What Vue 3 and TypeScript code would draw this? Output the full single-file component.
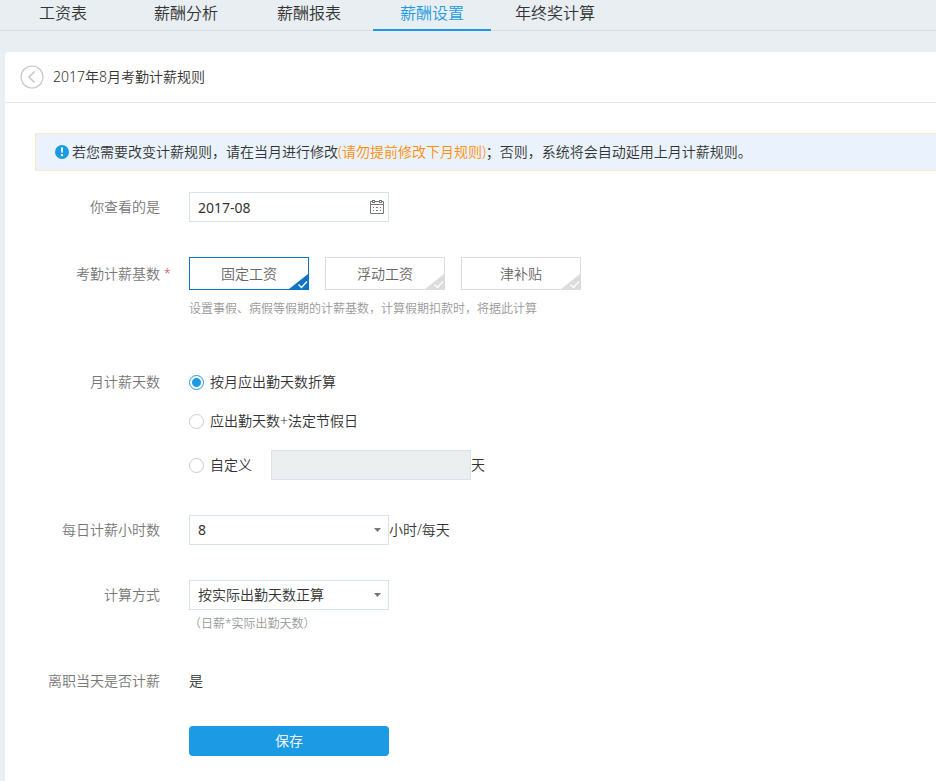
<script setup lang="ts">
import { ref } from 'vue'

interface BasisOption {
  key: string
  name: string
  checked: boolean
}

const tabs: string[] = ['工资表', '薪酬分析', '薪酬报表', '薪酬设置', '年终奖计算']
const activeTab = ref('薪酬设置')

const month = ref('2017-08')
const basis = ref<BasisOption[]>([
  { key: 'fixed', name: '固定工资', checked: true },
  { key: 'floating', name: '浮动工资', checked: false },
  { key: 'allowance', name: '津补贴', checked: false },
])
const dayRule = ref('attendance')
const customDays = ref('')
const hours = ref('8')
const method = ref('forward')
</script>

<template>
  <div class="page">
    <nav class="tabs">
      <a
        v-for="tab in tabs"
        :key="tab"
        href="#"
        class="tab"
        :class="{ active: tab === activeTab }"
        @click.prevent="activeTab = tab"
      >{{ tab }}</a>
    </nav>

    <main class="card">
      <header class="card-head">
        <button type="button" class="back" aria-label="返回">
          <svg width="24" height="24" viewBox="0 0 24 24" fill="none" stroke="#c8c8c8">
            <circle cx="12" cy="12" r="11" stroke-width="1.2" />
            <path d="M14.5 6.5 9 12l5.5 5.5" stroke-width="1.6" />
          </svg>
        </button>
        <h1 class="title">2017年8月考勤计薪规则</h1>
      </header>

      <div class="body">
        <div class="notice">
          <svg class="notice-icon" width="14" height="14" viewBox="0 0 14 14">
            <circle cx="7" cy="7" r="7" fill="#1c9ae4" />
            <path d="M6 2.6h2l-.3 5.2H6.3z" fill="#fff" />
            <circle cx="7" cy="10.2" r="1.1" fill="#fff" />
          </svg>
          <p class="notice-text">若您需要改变计薪规则，请在当月进行修改<em class="warn">(请勿提前修改下月规则)</em>；否则，系统将会自动延用上月计薪规则。</p>
        </div>

        <form class="form" @submit.prevent>
          <div class="row">
            <label class="label" for="month">你查看的是</label>
            <div class="control">
              <div class="field">
                <input id="month" v-model="month" class="input numeric" type="text" />
                <svg class="calendar" width="14" height="14" viewBox="0 0 14 14" fill="none" stroke="#777">
                  <path d="M.5 1.5v12h13v-12M0 4.5h14M.5 1.5H2M5 1.5h4M12 1.5h1.5" />
                  <rect x="2.5" y=".5" width="2" height="2" />
                  <rect x="9.5" y=".5" width="2" height="2" />
                  <path d="M3 7.5h1M6 7.5h2M10 7.5h1M3 10.5h1M6 10.5h2M10 10.5h1" />
                </svg>
              </div>
            </div>
          </div>

          <div class="row">
            <span id="basis-label" class="label required">考勤计薪基数</span>
            <div class="control options" role="group" aria-labelledby="basis-label">
              <button
                v-for="item in basis"
                :key="item.key"
                type="button"
                class="option"
                :class="{ checked: item.checked }"
                :aria-pressed="item.checked"
                @click="item.checked = !item.checked"
              >
                {{ item.name }}
                <svg class="corner" width="19" height="15" viewBox="0 0 19 15">
                  <path d="M19 0v15H0z" fill="currentColor" />
                  <path d="M9.5 10.5l3 3 5.5-6" fill="none" stroke="#fff" stroke-width="1.3" />
                </svg>
              </button>
            </div>
            <p class="hint basis-hint">设置事假、病假等假期的计薪基数，计算假期扣款时，将据此计算</p>
          </div>

          <div class="row days">
            <span id="days-label" class="label">月计薪天数</span>
            <div class="control radios" role="radiogroup" aria-labelledby="days-label">
              <label class="radio">
                <input v-model="dayRule" type="radio" name="days" value="attendance" />
                按月应出勤天数折算
              </label>
              <label class="radio">
                <input v-model="dayRule" type="radio" name="days" value="holiday" />
                应出勤天数+法定节假日
              </label>
              <div class="custom">
                <label class="radio">
                  <input v-model="dayRule" type="radio" name="days" value="custom" />
                  自定义
                </label>
                <input
                  v-model="customDays"
                  class="input numeric"
                  type="text"
                  aria-label="自定义天数"
                  :disabled="dayRule !== 'custom'"
                />
                <span>天</span>
              </div>
            </div>
          </div>

          <div class="row">
            <label class="label" for="hours">每日计薪小时数</label>
            <div class="control">
              <div class="field">
                <select id="hours" v-model="hours" class="input numeric">
                  <option value="8">8</option>
                </select>
                <svg class="arrow" width="7" height="4" viewBox="0 0 7 4"><path d="M0 0h7L3.5 4z" fill="#777" /></svg>
              </div>
              <span>小时/每天</span>
            </div>
          </div>

          <div class="row">
            <label class="label" for="method">计算方式</label>
            <div class="control">
              <div class="field">
                <select id="method" v-model="method" class="input">
                  <option value="forward">按实际出勤天数正算</option>
                </select>
                <svg class="arrow" width="7" height="4" viewBox="0 0 7 4"><path d="M0 0h7L3.5 4z" fill="#777" /></svg>
              </div>
            </div>
            <p class="hint">（日薪*实际出勤天数）</p>
          </div>

          <div class="row">
            <span class="label">离职当天是否计薪</span>
            <div class="control">是</div>
          </div>

          <div class="row">
            <button type="submit" class="save">保存</button>
          </div>
        </form>
      </div>
    </main>
  </div>
</template>

<style>
body {
  margin: 0;
  background: #e9eef2;
}
</style>

<style scoped>
* {
  box-sizing: border-box;
}

.page {
  display: flex;
  flex-direction: column;
  min-height: 100vh;
  background: #e9eef2;
  color: #333;
  font-family: "Noto Sans", "Noto Sans CJK SC", sans-serif;
  font-size: 14px;
  font-weight: 350;
  line-height: 20px;
}

button,
input,
select {
  margin: 0;
  font: inherit;
  color: inherit;
}

.tabs {
  display: flex;
  gap: 5px;
  padding-left: 4px;
  border-bottom: 1px solid #dadada;
}

.tab {
  width: 118px;
  height: 31px;
  margin-bottom: -1px;
  border-bottom: 2px solid transparent;
  color: #333;
  font-size: 16px;
  line-height: 26px;
  text-align: center;
  text-decoration: none;
}

.tab.active {
  border-bottom-color: #1c9ae4;
  color: #1c9ae4;
}

.card {
  flex: 1;
  margin: 21px 0 0 5px;
  border-top-left-radius: 4px;
  background: #fff;
}

.card-head {
  display: flex;
  align-items: center;
  gap: 9px;
  height: 51px;
  padding-left: 15px;
  border-bottom: 1px solid #e8e8e8;
}

.back {
  display: flex;
  padding: 0;
  border: 0;
  background: none;
  cursor: pointer;
}

.title {
  margin: 0;
  font-size: 14px;
  font-weight: inherit;
  line-height: 22px;
}

.body {
  padding: 30px 0 25px 30px;
}

.notice {
  display: flex;
  align-items: center;
  gap: 3px;
  height: 38px;
  padding-left: 19px;
  border: 1px solid #fce8cd;
  border-right: 0;
  background: #eaf3fd;
}

.notice-text {
  margin: 0;
}

.warn {
  color: #ff8c0a;
  font-style: normal;
}

.form {
  display: flex;
  flex-direction: column;
  gap: 35px;
  padding-top: 21px;
}

.row {
  display: grid;
  grid-template-columns: 125px 1fr;
  column-gap: 29px;
  align-items: center;
}

.label {
  position: relative;
  color: #777;
  text-align: right;
  white-space: nowrap;
}

.required::after {
  content: "*";
  position: absolute;
  left: 100%;
  padding-left: 4px;
  color: #e4393c;
  font-size: 12px;
}

.control {
  display: flex;
  align-items: center;
}

.field {
  position: relative;
}

.input {
  display: block;
  width: 200px;
  height: 30px;
  padding: 0 8px;
  border: 1px solid #dae3eb;
  border-radius: 0;
  outline: 0;
  background: #fff;
  appearance: none;
}

.numeric {
  font-weight: 400;
}

.input:disabled {
  background: #ebeff0;
}

.calendar {
  position: absolute;
  top: 8px;
  right: 5px;
}

.arrow {
  position: absolute;
  top: 13px;
  right: 8px;
  pointer-events: none;
}

.options {
  gap: 16px;
}

.option {
  position: relative;
  width: 120px;
  height: 33px;
  padding: 0;
  border: 1px solid #dcdcdc;
  background: #fff;
  color: #666;
  cursor: pointer;
}

.option.checked {
  border-color: #0f74c4;
}

.corner {
  position: absolute;
  right: 0;
  bottom: 0;
  color: #dcdcdc;
}

.checked .corner {
  color: #0f74c4;
}

.hint {
  grid-column: 2;
  margin: 4px 0 2px;
  color: #999;
  font-size: 12px;
}

.basis-hint {
  margin: 9px 0 18px;
}

.days {
  align-items: start;
}

.radios {
  flex-direction: column;
  align-items: flex-start;
  gap: 19px;
}

.radio {
  display: flex;
  align-items: center;
  gap: 6px;
}

.radio input {
  width: 15px;
  height: 15px;
  border: 1px solid #ccc;
  border-radius: 50%;
  background: #fff;
  appearance: none;
}

.radio input:checked {
  border-color: #1c9ae4;
  background: radial-gradient(circle, #1c9ae4 4px, #fff 5px);
}

.custom {
  display: flex;
  align-items: center;
}

.custom .input {
  margin-left: 19px;
}

.save {
  grid-column: 2;
  width: 200px;
  height: 30px;
  padding: 0;
  border: 0;
  border-radius: 4px;
  background: #1c9ae4;
  color: #fff;
  cursor: pointer;
}
</style>
